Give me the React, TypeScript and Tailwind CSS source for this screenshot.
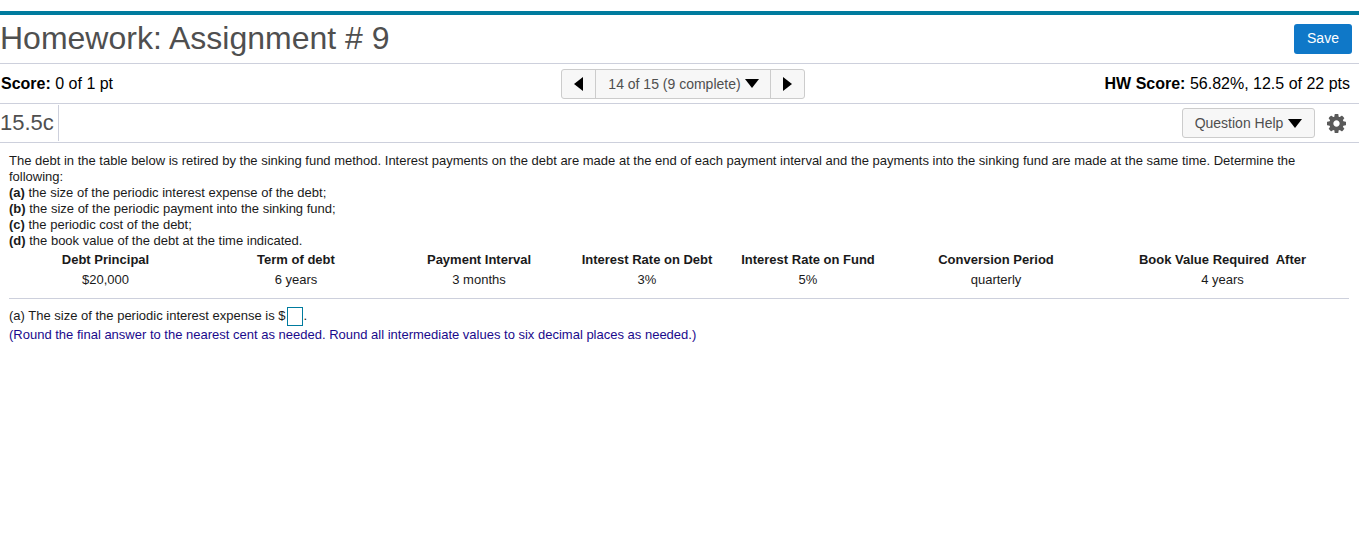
import React from 'react';

const COLUMNS = [
  { head: 'Debt Principal', value: '$20,000' },
  { head: 'Term of debt', value: '6 years' },
  { head: 'Payment Interval', value: '3 months' },
  { head: 'Interest Rate on Debt', value: '3%' },
  { head: 'Interest Rate on Fund', value: '5%' },
  { head: 'Conversion Period', value: 'quarterly' },
  { head: 'Book Value Required\u00a0 After', value: '4 years' },
];

const Caret = ({ dir }: { dir: 'left' | 'right' | 'down' }) => {
  if (dir === 'down') {
    return (
      <svg width="14" height="9" viewBox="0 0 14 9" className="fill-black">
        <polygon points="0,0 14,0 7,9" />
      </svg>
    );
  }
  return (
    <svg width="9" height="14" viewBox="0 0 9 14" className="fill-black">
      <polygon points={dir === 'left' ? '9,0 9,14 0,7' : '0,0 0,14 9,7'} />
    </svg>
  );
};

const Gear = () => (
  <svg width="19" height="19" viewBox="128 128 1536 1536" className="fill-[#5a5a5a]">
    <path d="M1152 896q0-106-75-181t-181-75-181 75-75 181 75 181 181 75 181-75 75-181zm512-109v222q0 12-8 23t-20 13l-185 28q-19 54-39 91 35 50 107 138 10 12 10 25t-9 23q-27 37-99 108t-94 71q-12 0-26-9l-138-108q-44 23-91 38-16 136-29 186-7 28-36 28h-222q-14 0-24.5-8.5t-11.5-21.5l-28-184q-49-16-90-37l-141 107q-10 9-25 9-14 0-25-11-126-114-165-168-7-10-7-23 0-12 8-23 15-21 51-66.5t54-70.5q-27-50-41-99l-183-27q-13-2-21-12.5t-8-23.5v-222q0-12 8-23t19-13l186-28q14-46 39-92-40-57-107-138-10-12-10-24 0-10 9-23 26-36 98.5-107.5t94.5-71.5q13 0 26 10l138 107q44-23 91-38 16-136 29-186 7-28 36-28h222q14 0 24.5 8.5t11.5 21.5l28 184q49 16 90 37l142-107q9-9 24-9 13 0 25 10 129 119 165 170 7 8 7 22 0 12-8 23-15 21-51 66.5t-54 70.5q26 50 41 98l183 28q13 2 21 12.5t8 23.5z" />
  </svg>
);

export default function App() {
  return (
    <div className="min-h-[546px] bg-white pt-[11px] font-['Liberation_Sans',Arial,sans-serif] text-black">
      <div className="w-[1359px]">
        <div className="h-[4px] bg-[#007b9e]" />

        {/* Title */}
        <div className="flex h-[49px] items-center justify-between border-b border-[#cdd0dc] pr-[7px]">
          <h1 className="pb-[3px] text-[32px] leading-[40px] text-[#4f4f4f]">Homework: Assignment # 9</h1>
          <button className="mb-[1px] h-[30px] w-[58px] rounded-[3px] bg-[#0f78c8] text-[14px] text-white">Save</button>
        </div>

        {/* Score row */}
        <div className="flex h-[40px] items-center border-b border-[#cdd0dc] pr-[9px] pl-[1px] text-[16px]">
          <div className="flex-1">
            <span className="font-bold">Score:</span> 0 of 1 pt
          </div>
          <div className="ml-[14px] flex h-[30px] items-stretch rounded-[3px] border border-[#cccccc] bg-[#f7f7f7] text-[14px] text-[#4f4f4f]">
            <div className="flex w-[34px] items-center justify-center border-r border-[#cccccc]">
              <Caret dir="left" />
            </div>
            <div className="flex w-[175px] items-center justify-center gap-[4px] border-r border-[#cccccc] pl-[2px]">
              <span className="pt-[1px]">14 of 15 (9 complete)</span>
              <Caret dir="down" />
            </div>
            <div className="flex w-[33px] items-center justify-center">
              <Caret dir="right" />
            </div>
          </div>
          <div className="flex-1 text-right">
            <span className="font-bold">HW Score:</span> 56.82%, 12.5 of 22 pts
          </div>
        </div>

        {/* Section row */}
        <div className="flex h-[39px] items-center justify-between border-b border-[#cdd0dc] pr-[13px]">
          <div className="flex h-[36px] w-[59px] items-center border-r border-[#cdd0dc] pb-[2px] text-[22px] text-[#4f4f4f]">15.5c</div>
          <div className="flex items-center gap-[12px]">
            <button className="flex h-[30px] w-[133px] items-center justify-center gap-[5px] rounded-[3px] border border-[#cccccc] bg-[#f7f7f7] text-[14px] text-[#4f4f4f]">
              Question Help
              <Caret dir="down" />
            </button>
            <Gear />
          </div>
        </div>

        {/* Question */}
        <div className="pt-[10px] pr-[12px] pl-[9px] text-[13px] leading-[16px] text-[#1a1a1a]">
          <p>
            The debt in the table below is retired by the sinking fund method. Interest payments on the debt are made at the end of each payment interval and the payments into the sinking fund are made at the same time. Determine the following:
          </p>
          <p><b>(a)</b> the size of the periodic interest expense of the debt;</p>
          <p><b>(b)</b> the size of the periodic payment into the sinking fund;</p>
          <p><b>(c)</b> the periodic cost of the debt;</p>
          <p><b>(d)</b> the book value of the debt at the time indicated.</p>
        </div>

        <div className="mr-[10px] ml-[9px] grid grid-cols-[193px_188px_178px_158px_164px_212px_241px] border-b border-[#cdd0dc] pb-[10px] text-center text-[13px] text-[#1a1a1a]">
          {COLUMNS.map((c) => (
            <div key={c.head} className="leading-[16px]">
              <div className="mt-[3px] font-bold">{c.head}</div>
              <div className="mt-[4px]">{c.value}</div>
            </div>
          ))}
        </div>

        <div className="px-[9px] pt-[7px] text-[13px] text-[#1a1a1a]">
          <div className="flex h-[20px] items-center">
            (a) The size of the periodic interest expense is $
            <span className="mx-[1px] inline-block h-[19px] w-[16px] border border-[#007b9e]" />.
          </div>
          <div className="mt-[1px] leading-[16px] text-[#1a0a8c]">
            (Round the final answer to the nearest cent as needed. Round all intermediate values to six decimal places as needed.)
          </div>
        </div>
      </div>
    </div>
  );
}
